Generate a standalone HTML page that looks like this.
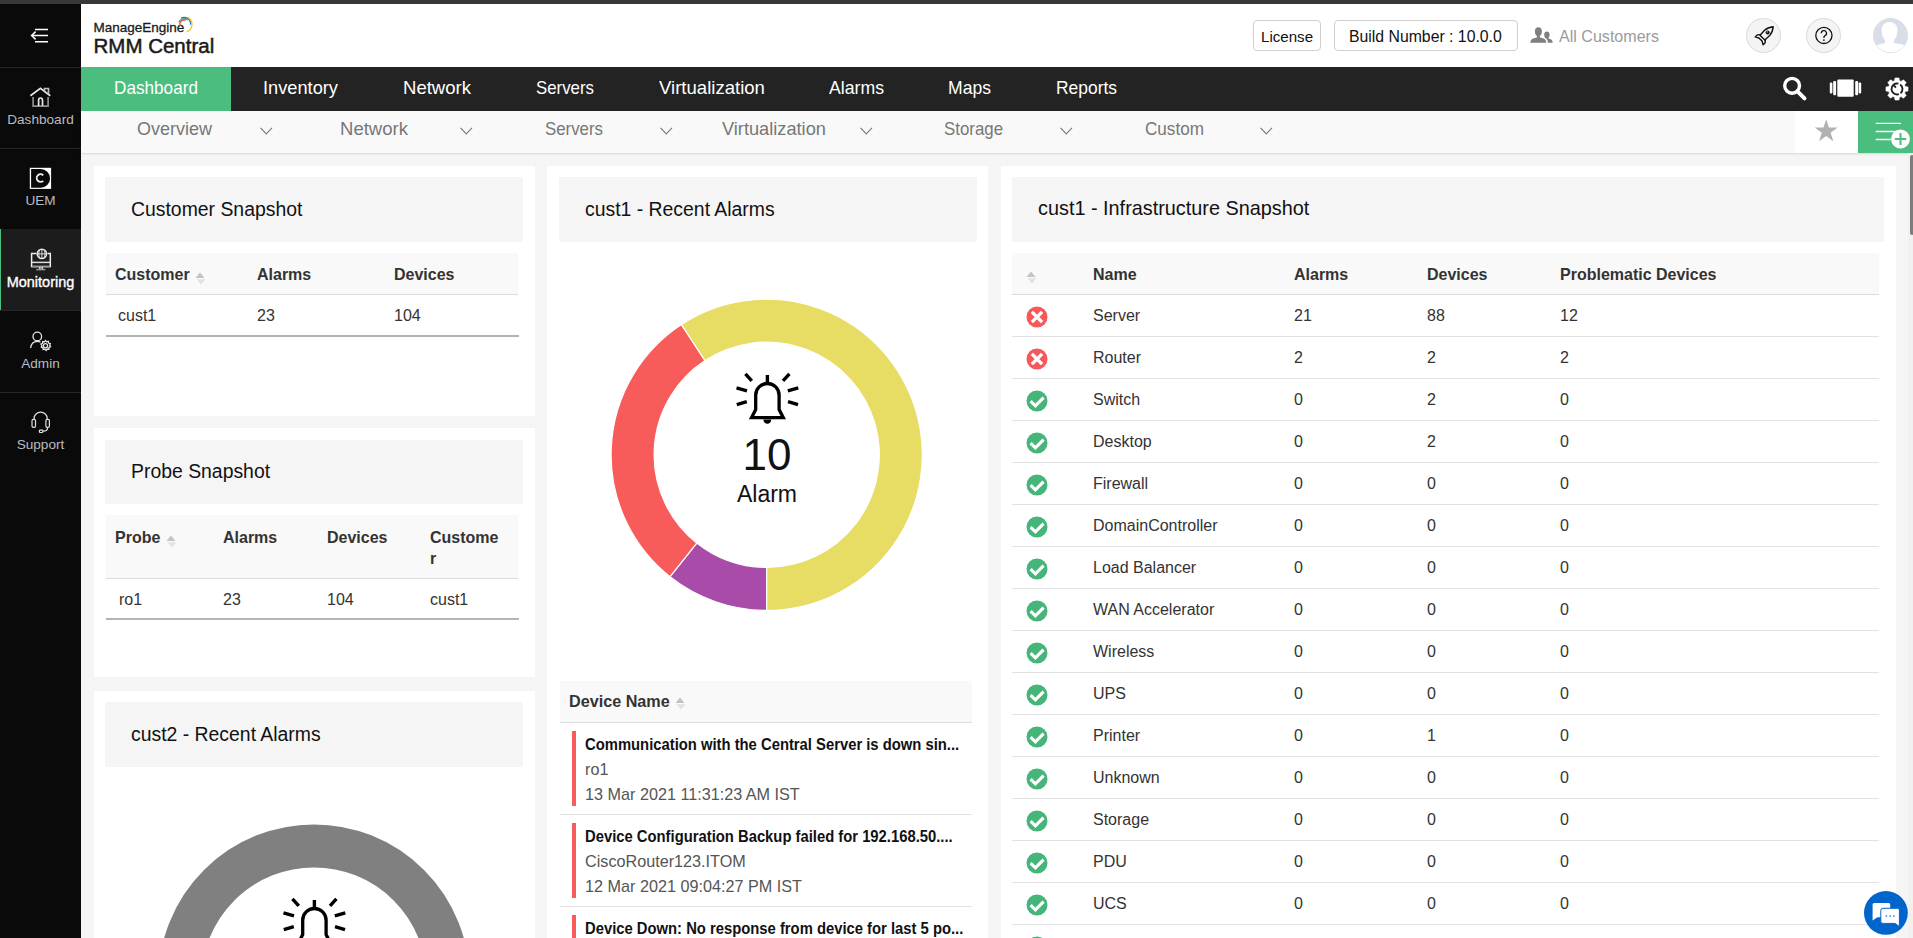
<!DOCTYPE html>
<html><head><meta charset="utf-8">
<style>
*{box-sizing:border-box;margin:0;padding:0}
html,body{width:1913px;height:938px;overflow:hidden;background:#f5f5f5;font-family:"Liberation Sans",sans-serif;color:#222}
.a{position:absolute}
.t{position:absolute;white-space:nowrap;line-height:1}
#topbar{left:0;top:0;width:1913px;height:4px;background:#37393d}
#side{left:0;top:4px;width:81px;height:934px;background:#0a0a0a}
.sep{position:absolute;left:0;width:81px;height:1px;background:#262626}
.sl{position:absolute;left:0;width:81px;text-align:center;font-size:13.6px;color:#b9bcc2;white-space:nowrap;line-height:1}
#hdr{left:81px;top:4px;width:1832px;height:63px;background:#fff}
#nav{left:81px;top:67px;width:1832px;height:44px;background:#232323}
.nv{position:absolute;top:78.6px;font-size:18.4px;transform-origin:0 0;color:#fff;white-space:nowrap;line-height:1}
#sub{left:81px;top:111px;width:1832px;height:42px;background:#f9f9f9;box-shadow:0 1px 2px rgba(0,0,0,.12)}
.sb{position:absolute;top:119.8px;font-size:18.4px;transform-origin:0 0;color:#777;white-space:nowrap;line-height:1}
.card{position:absolute;background:#fff}
.ch{position:absolute;background:#f5f5f5;border-radius:2px}
.ct{position:absolute;font-size:19.4px;color:#111;white-space:nowrap;line-height:1}
.th{position:absolute;background:#f9f9f9;border-bottom:1px solid #dcdcdc}
.hb{position:absolute;margin-top:0px;font-size:17px;transform:scaleX(0.941);transform-origin:0 0;font-weight:bold;color:#333;white-space:nowrap;line-height:1}
.td{position:absolute;font-size:16px;color:#333;white-space:nowrap;line-height:1}
.rl{position:absolute;height:1px;background:#e2e2e2}
</style></head><body>
<div id="topbar" class="a"></div>
<div id="side" class="a"></div>
<div class="sep" style="top:67px"></div>
<div class="sep" style="top:148px"></div>
<div class="sep" style="top:229px"></div>
<div class="sep" style="top:310px"></div>
<div class="sep" style="top:392px"></div>
<div class="a" style="left:0;top:229px;width:81px;height:81px;background:#1c1c1c;border-left:1px solid #4bbd7f"></div>
<div class="sl" style="top:113px">Dashboard</div>
<div class="sl" style="top:194px">UEM</div>
<div class="sl" style="top:274.5px;color:#fff;font-size:14.5px;-webkit-text-stroke:0.35px #fff">Monitoring</div>
<div class="sl" style="top:357px">Admin</div>
<div class="sl" style="top:438px">Support</div>

<div id="hdr" class="a"></div>
<div id="nav" class="a"></div>
<div class="a" style="left:81px;top:67px;width:150px;height:44px;background:#4bbd7f"></div>
<div class="nv" style="left:114px;transform:scaleX(0.933)">Dashboard</div>
<div class="nv" style="left:263px;transform:scaleX(0.991)">Inventory</div>
<div class="nv" style="left:403px;transform:scaleX(1.008)">Network</div>
<div class="nv" style="left:536px;transform:scaleX(0.915)">Servers</div>
<div class="nv" style="left:659px;transform:scaleX(1.009)">Virtualization</div>
<div class="nv" style="left:829px;transform:scaleX(0.961)">Alarms</div>
<div class="nv" style="left:948px;transform:scaleX(0.955)">Maps</div>
<div class="nv" style="left:1056px;transform:scaleX(0.947)">Reports</div>

<div id="sub" class="a"></div>
<div class="sb" style="left:137px;transform:scaleX(0.978)">Overview</div>
<div class="sb" style="left:340px;transform:scaleX(1.008)">Network</div>
<div class="sb" style="left:545px;transform:scaleX(0.915)">Servers</div>
<div class="sb" style="left:722px;transform:scaleX(0.990)">Virtualization</div>
<div class="sb" style="left:944px;transform:scaleX(0.916)">Storage</div>
<div class="sb" style="left:1145px;transform:scaleX(0.930)">Custom</div>
<div class="a" style="left:1795px;top:111px;width:63px;height:42px;background:#fff"></div>
<div class="a" style="left:1858px;top:111px;width:55px;height:42px;background:#4bbd7f"></div>

<!-- Card A -->
<div class="card" style="left:94px;top:166px;width:441px;height:250px"></div>
<div class="ch" style="left:105px;top:177px;width:418px;height:65px"></div>
<div class="ct" style="left:131px;top:200px">Customer Snapshot</div>
<div class="th" style="left:106px;top:253px;width:412px;height:42px"></div>
<div class="hb" style="left:115px;top:266px">Customer</div>
<div class="hb" style="left:257px;top:266px">Alarms</div>
<div class="hb" style="left:394px;top:266px">Devices</div>
<div class="td" style="left:118px;top:308px">cust1</div>
<div class="td" style="left:257px;top:308px">23</div>
<div class="td" style="left:394px;top:308px">104</div>
<div class="a" style="left:106px;top:335px;width:413px;height:2px;background:#b4b4b4"></div>

<!-- Card B -->
<div class="card" style="left:94px;top:428px;width:441px;height:249px"></div>
<div class="ch" style="left:105px;top:440px;width:418px;height:64px"></div>
<div class="ct" style="left:131px;top:462px">Probe Snapshot</div>
<div class="th" style="left:106px;top:515px;width:412px;height:64px"></div>
<div class="hb" style="left:115px;top:529px">Probe</div>
<div class="hb" style="left:223px;top:529px">Alarms</div>
<div class="hb" style="left:327px;top:529px">Devices</div>
<div class="hb" style="left:430px;top:529px">Custome</div>
<div class="hb" style="left:430px;top:550px">r</div>
<div class="td" style="left:119px;top:592px">ro1</div>
<div class="td" style="left:223px;top:592px">23</div>
<div class="td" style="left:327px;top:592px">104</div>
<div class="td" style="left:430px;top:592px">cust1</div>
<div class="a" style="left:106px;top:618px;width:413px;height:2px;background:#b4b4b4"></div>

<!-- Card C -->
<div class="card" style="left:94px;top:691px;width:441px;height:247px"></div>
<div class="ch" style="left:105px;top:702px;width:418px;height:65px"></div>
<div class="ct" style="left:131px;top:725px">cust2 - Recent Alarms</div>

<!-- Card D -->
<div class="card" style="left:547px;top:166px;width:441px;height:772px"></div>
<div class="ch" style="left:559px;top:177px;width:418px;height:65px"></div>
<div class="ct" style="left:585px;top:200px">cust1 - Recent Alarms</div>

<!-- Card E -->
<div class="card" style="left:1001px;top:166px;width:895px;height:772px"></div>
<div class="ch" style="left:1012px;top:177px;width:872px;height:65px"></div>
<div class="ct" style="left:1038px;top:199px;font-size:19.85px">cust1 - Infrastructure Snapshot</div>
<div class="th" style="left:1012px;top:253px;width:867px;height:42px"></div>
<div class="hb" style="left:1093px;top:266px">Name</div>
<div class="hb" style="left:1294px;top:266px">Alarms</div>
<div class="hb" style="left:1427px;top:266px">Devices</div>
<div class="hb" style="left:1560px;top:266px">Problematic Devices</div>
<div class="rl" style="left:1012px;top:336px;width:867px"></div>
<svg class="a" style="left:1026px;top:306px" width="22" height="22" viewBox="0 0 22 22"><circle cx="11" cy="11" r="10.5" fill="#f55a5a"/><path d="M5.9 5.9L16.1 16.1M16.1 5.9L5.9 16.1" stroke="#fff" stroke-width="3.3" fill="none"/></svg>
<div class="td" style="left:1093px;top:308px">Server</div>
<div class="td" style="left:1294px;top:308px">21</div>
<div class="td" style="left:1427px;top:308px">88</div>
<div class="td" style="left:1560px;top:308px">12</div>
<div class="rl" style="left:1012px;top:378px;width:867px"></div>
<svg class="a" style="left:1026px;top:348px" width="22" height="22" viewBox="0 0 22 22"><circle cx="11" cy="11" r="10.5" fill="#f55a5a"/><path d="M5.9 5.9L16.1 16.1M16.1 5.9L5.9 16.1" stroke="#fff" stroke-width="3.3" fill="none"/></svg>
<div class="td" style="left:1093px;top:350px">Router</div>
<div class="td" style="left:1294px;top:350px">2</div>
<div class="td" style="left:1427px;top:350px">2</div>
<div class="td" style="left:1560px;top:350px">2</div>
<div class="rl" style="left:1012px;top:420px;width:867px"></div>
<svg class="a" style="left:1026px;top:390px" width="22" height="22" viewBox="0 0 22 22"><circle cx="11" cy="11" r="10.5" fill="#46b57a"/><path d="M4.6 11.2L9.4 15.8 17.6 7.6" stroke="#fff" stroke-width="3.2" fill="none"/></svg>
<div class="td" style="left:1093px;top:392px">Switch</div>
<div class="td" style="left:1294px;top:392px">0</div>
<div class="td" style="left:1427px;top:392px">2</div>
<div class="td" style="left:1560px;top:392px">0</div>
<div class="rl" style="left:1012px;top:462px;width:867px"></div>
<svg class="a" style="left:1026px;top:432px" width="22" height="22" viewBox="0 0 22 22"><circle cx="11" cy="11" r="10.5" fill="#46b57a"/><path d="M4.6 11.2L9.4 15.8 17.6 7.6" stroke="#fff" stroke-width="3.2" fill="none"/></svg>
<div class="td" style="left:1093px;top:434px">Desktop</div>
<div class="td" style="left:1294px;top:434px">0</div>
<div class="td" style="left:1427px;top:434px">2</div>
<div class="td" style="left:1560px;top:434px">0</div>
<div class="rl" style="left:1012px;top:504px;width:867px"></div>
<svg class="a" style="left:1026px;top:474px" width="22" height="22" viewBox="0 0 22 22"><circle cx="11" cy="11" r="10.5" fill="#46b57a"/><path d="M4.6 11.2L9.4 15.8 17.6 7.6" stroke="#fff" stroke-width="3.2" fill="none"/></svg>
<div class="td" style="left:1093px;top:476px">Firewall</div>
<div class="td" style="left:1294px;top:476px">0</div>
<div class="td" style="left:1427px;top:476px">0</div>
<div class="td" style="left:1560px;top:476px">0</div>
<div class="rl" style="left:1012px;top:546px;width:867px"></div>
<svg class="a" style="left:1026px;top:516px" width="22" height="22" viewBox="0 0 22 22"><circle cx="11" cy="11" r="10.5" fill="#46b57a"/><path d="M4.6 11.2L9.4 15.8 17.6 7.6" stroke="#fff" stroke-width="3.2" fill="none"/></svg>
<div class="td" style="left:1093px;top:518px">DomainController</div>
<div class="td" style="left:1294px;top:518px">0</div>
<div class="td" style="left:1427px;top:518px">0</div>
<div class="td" style="left:1560px;top:518px">0</div>
<div class="rl" style="left:1012px;top:588px;width:867px"></div>
<svg class="a" style="left:1026px;top:558px" width="22" height="22" viewBox="0 0 22 22"><circle cx="11" cy="11" r="10.5" fill="#46b57a"/><path d="M4.6 11.2L9.4 15.8 17.6 7.6" stroke="#fff" stroke-width="3.2" fill="none"/></svg>
<div class="td" style="left:1093px;top:560px">Load Balancer</div>
<div class="td" style="left:1294px;top:560px">0</div>
<div class="td" style="left:1427px;top:560px">0</div>
<div class="td" style="left:1560px;top:560px">0</div>
<div class="rl" style="left:1012px;top:630px;width:867px"></div>
<svg class="a" style="left:1026px;top:600px" width="22" height="22" viewBox="0 0 22 22"><circle cx="11" cy="11" r="10.5" fill="#46b57a"/><path d="M4.6 11.2L9.4 15.8 17.6 7.6" stroke="#fff" stroke-width="3.2" fill="none"/></svg>
<div class="td" style="left:1093px;top:602px">WAN Accelerator</div>
<div class="td" style="left:1294px;top:602px">0</div>
<div class="td" style="left:1427px;top:602px">0</div>
<div class="td" style="left:1560px;top:602px">0</div>
<div class="rl" style="left:1012px;top:672px;width:867px"></div>
<svg class="a" style="left:1026px;top:642px" width="22" height="22" viewBox="0 0 22 22"><circle cx="11" cy="11" r="10.5" fill="#46b57a"/><path d="M4.6 11.2L9.4 15.8 17.6 7.6" stroke="#fff" stroke-width="3.2" fill="none"/></svg>
<div class="td" style="left:1093px;top:644px">Wireless</div>
<div class="td" style="left:1294px;top:644px">0</div>
<div class="td" style="left:1427px;top:644px">0</div>
<div class="td" style="left:1560px;top:644px">0</div>
<div class="rl" style="left:1012px;top:714px;width:867px"></div>
<svg class="a" style="left:1026px;top:684px" width="22" height="22" viewBox="0 0 22 22"><circle cx="11" cy="11" r="10.5" fill="#46b57a"/><path d="M4.6 11.2L9.4 15.8 17.6 7.6" stroke="#fff" stroke-width="3.2" fill="none"/></svg>
<div class="td" style="left:1093px;top:686px">UPS</div>
<div class="td" style="left:1294px;top:686px">0</div>
<div class="td" style="left:1427px;top:686px">0</div>
<div class="td" style="left:1560px;top:686px">0</div>
<div class="rl" style="left:1012px;top:756px;width:867px"></div>
<svg class="a" style="left:1026px;top:726px" width="22" height="22" viewBox="0 0 22 22"><circle cx="11" cy="11" r="10.5" fill="#46b57a"/><path d="M4.6 11.2L9.4 15.8 17.6 7.6" stroke="#fff" stroke-width="3.2" fill="none"/></svg>
<div class="td" style="left:1093px;top:728px">Printer</div>
<div class="td" style="left:1294px;top:728px">0</div>
<div class="td" style="left:1427px;top:728px">1</div>
<div class="td" style="left:1560px;top:728px">0</div>
<div class="rl" style="left:1012px;top:798px;width:867px"></div>
<svg class="a" style="left:1026px;top:768px" width="22" height="22" viewBox="0 0 22 22"><circle cx="11" cy="11" r="10.5" fill="#46b57a"/><path d="M4.6 11.2L9.4 15.8 17.6 7.6" stroke="#fff" stroke-width="3.2" fill="none"/></svg>
<div class="td" style="left:1093px;top:770px">Unknown</div>
<div class="td" style="left:1294px;top:770px">0</div>
<div class="td" style="left:1427px;top:770px">0</div>
<div class="td" style="left:1560px;top:770px">0</div>
<div class="rl" style="left:1012px;top:840px;width:867px"></div>
<svg class="a" style="left:1026px;top:810px" width="22" height="22" viewBox="0 0 22 22"><circle cx="11" cy="11" r="10.5" fill="#46b57a"/><path d="M4.6 11.2L9.4 15.8 17.6 7.6" stroke="#fff" stroke-width="3.2" fill="none"/></svg>
<div class="td" style="left:1093px;top:812px">Storage</div>
<div class="td" style="left:1294px;top:812px">0</div>
<div class="td" style="left:1427px;top:812px">0</div>
<div class="td" style="left:1560px;top:812px">0</div>
<div class="rl" style="left:1012px;top:882px;width:867px"></div>
<svg class="a" style="left:1026px;top:852px" width="22" height="22" viewBox="0 0 22 22"><circle cx="11" cy="11" r="10.5" fill="#46b57a"/><path d="M4.6 11.2L9.4 15.8 17.6 7.6" stroke="#fff" stroke-width="3.2" fill="none"/></svg>
<div class="td" style="left:1093px;top:854px">PDU</div>
<div class="td" style="left:1294px;top:854px">0</div>
<div class="td" style="left:1427px;top:854px">0</div>
<div class="td" style="left:1560px;top:854px">0</div>
<div class="rl" style="left:1012px;top:924px;width:867px"></div>
<svg class="a" style="left:1026px;top:894px" width="22" height="22" viewBox="0 0 22 22"><circle cx="11" cy="11" r="10.5" fill="#46b57a"/><path d="M4.6 11.2L9.4 15.8 17.6 7.6" stroke="#fff" stroke-width="3.2" fill="none"/></svg>
<div class="td" style="left:1093px;top:896px">UCS</div>
<div class="td" style="left:1294px;top:896px">0</div>
<div class="td" style="left:1427px;top:896px">0</div>
<div class="td" style="left:1560px;top:896px">0</div>
<div class="rl" style="left:1012px;top:966px;width:867px"></div>
<svg class="a" style="left:1026px;top:936px" width="22" height="22" viewBox="0 0 22 22"><circle cx="11" cy="11" r="10.5" fill="#46b57a"/><path d="M4.6 11.2L9.4 15.8 17.6 7.6" stroke="#fff" stroke-width="3.2" fill="none"/></svg>

<svg class="a" style="left:547px;top:166px" width="441" height="500" viewBox="0 0 441 500"><path d="M219.70 444.40A155.6 155.6 0 0 1 123.05 410.74L149.76 377.04A112.6 112.6 0 0 0 219.70 401.40Z" fill="#a94ca9" stroke="#fff" stroke-width="1.2"/><path d="M123.05 410.74A155.6 155.6 0 0 1 134.50 158.60L158.04 194.58A112.6 112.6 0 0 0 149.76 377.04Z" fill="#f85c5a" stroke="#fff" stroke-width="1.2"/><path d="M134.50 158.60A155.6 155.6 0 1 1 219.70 444.40L219.70 401.40A112.6 112.6 0 1 0 158.04 194.58Z" fill="#e7dc64" stroke="#fff" stroke-width="1.2"/></svg>
<svg class="a" style="left:94px;top:767px" width="441" height="171" viewBox="0 0 441 171"><circle cx="220" cy="213" r="134.1" stroke="#808080" stroke-width="43" fill="none"/></svg>
<svg class="a" style="left:732px;top:368px" width="71" height="58" viewBox="0 0 71 58"><path d="M13.4 5.8L19.8 12.8M4.5 19.8L15 22.8M4.8 36.6L14.8 33.6M57.4 5.8L51 12.8M66.3 19.8L55.8 22.8M66 36.6L56 33.6M35.4 7V14.5" stroke="#000" stroke-width="3.4" fill="none"/><path d="M19.5 49.7L23.7 41.6V27.2A11.7 11.7 0 0 1 47.1 27.2V41.6L51.3 49.7Z" stroke="#000" stroke-width="3.3" fill="none" stroke-linejoin="miter"/><path d="M31.4 51.4A3.95 4.4 0 0 0 39.3 51.4Z" fill="#000"/></svg>
<svg class="a" style="left:279px;top:893px" width="71" height="58" viewBox="0 0 71 58"><path d="M13.4 5.8L19.8 12.8M4.5 19.8L15 22.8M4.8 36.6L14.8 33.6M57.4 5.8L51 12.8M66.3 19.8L55.8 22.8M66 36.6L56 33.6M35.4 7V14.5" stroke="#000" stroke-width="3.4" fill="none"/><path d="M19.5 49.7L23.7 41.6V27.2A11.7 11.7 0 0 1 47.1 27.2V41.6L51.3 49.7Z" stroke="#000" stroke-width="3.3" fill="none" stroke-linejoin="miter"/><path d="M31.4 51.4A3.95 4.4 0 0 0 39.3 51.4Z" fill="#000"/></svg>
<div class="t" style="left:667px;width:200px;text-align:center;top:433px;font-size:44px;color:#111">10</div>
<div class="t" style="left:667px;width:200px;text-align:center;top:482.5px;font-size:23px;color:#111">Alarm</div>
<div class="th" style="left:560px;top:681px;width:412px;height:42px"></div>
<div class="hb" style="left:569px;top:693px;font-size:17.2px">Device Name</div>
<div class="a" style="left:572px;top:731px;width:4px;height:75px;background:#f85c5a"></div>
<div class="t" style="left:585px;top:736.0px;font-size:16.5px;font-weight:bold;color:#111;transform:scaleX(0.897);transform-origin:0 0">Communication with the Central Server is down sin...</div>
<div class="t" style="left:585px;top:761.0px;font-size:16.2px;color:#555">ro1</div>
<div class="t" style="left:585px;top:786.0px;font-size:16.2px;color:#555">13 Mar 2021 11:31:23 AM IST</div>
<div class="rl" style="left:560px;top:814px;width:412px"></div>
<div class="a" style="left:572px;top:823px;width:4px;height:75px;background:#f85c5a"></div>
<div class="t" style="left:585px;top:828.0px;font-size:16.5px;font-weight:bold;color:#111;transform:scaleX(0.897);transform-origin:0 0">Device Configuration Backup failed for 192.168.50....</div>
<div class="t" style="left:585px;top:853.0px;font-size:16.2px;color:#555">CiscoRouter123.ITOM</div>
<div class="t" style="left:585px;top:878.0px;font-size:16.2px;color:#555">12 Mar 2021 09:04:27 PM IST</div>
<div class="rl" style="left:560px;top:906px;width:412px"></div>
<div class="a" style="left:572px;top:915px;width:4px;height:75px;background:#f85c5a"></div>
<div class="t" style="left:585px;top:920.0px;font-size:16.5px;font-weight:bold;color:#111;transform:scaleX(0.897);transform-origin:0 0">Device Down: No response from device for last 5 po...</div>
<svg class="a" style="left:195px;top:272px" width="11" height="13" viewBox="0 0 11 13"><path d="M0.5 6L5 0.5 9.5 6z" fill="#c4c4c4"/><path d="M1.5 7.2L6 12.5 10.5 7.2z" fill="#e2e2e2"/></svg>
<svg class="a" style="left:166px;top:535px" width="11" height="13" viewBox="0 0 11 13"><path d="M0.5 6L5 0.5 9.5 6z" fill="#c4c4c4"/><path d="M1.5 7.2L6 12.5 10.5 7.2z" fill="#e2e2e2"/></svg>
<svg class="a" style="left:1026px;top:271px" width="11" height="13" viewBox="0 0 11 13"><path d="M0.5 6L5 0.5 9.5 6z" fill="#c4c4c4"/><path d="M1.5 7.2L6 12.5 10.5 7.2z" fill="#e2e2e2"/></svg>
<svg class="a" style="left:675px;top:697px" width="11" height="13" viewBox="0 0 11 13"><path d="M0.5 6L5 0.5 9.5 6z" fill="#c4c4c4"/><path d="M1.5 7.2L6 12.5 10.5 7.2z" fill="#e2e2e2"/></svg>
<div class="t" style="left:93.5px;top:20.5px;font-size:13.5px;color:#1a1a1a;-webkit-text-stroke:0.3px #1a1a1a">ManageEngine</div>
<div class="t" style="left:93.5px;top:36.2px;font-size:20.5px;color:#1a1a1a;-webkit-text-stroke:0.5px #1a1a1a">RMM Central</div>
<svg class="a" style="left:175px;top:14.2px" width="20" height="20" viewBox="0 0 20 20"><g fill="none" stroke-width="1.4"><path d="M5.05 11.64A4.2 4.2 0 0 1 10.44 6.25" stroke="#e94a4a"/><path d="M3.83 8.32A5.5 5.5 0 0 1 12.54 5.99" stroke="#3fae5a"/><path d="M6.13 4.04A6.8 6.8 0 0 1 15.77 10.79" stroke="#2b73c9"/><path d="M13.00 3.27A8 8 0 0 1 11.74 17.72" stroke="#f2c93a"/></g></svg>
<div class="a" style="left:1253px;top:20px;width:68px;height:31px;border:1px solid #cfcfcf;border-radius:4px;background:#fff"></div>
<div class="t" style="left:1261px;top:29.3px;font-size:15.1px;color:#111">License</div>
<div class="a" style="left:1334px;top:20px;width:184px;height:31px;border:1px solid #cfcfcf;border-radius:4px;background:#fff"></div>
<div class="t" style="left:1349px;top:28.8px;font-size:15.8px;color:#111">Build Number : 10.0.0</div>
<svg class="a" style="left:1529px;top:26px" width="26" height="18" viewBox="0 0 26 18"><g fill="#7f7f7f"><path d="M9.4 1.3C7.3 1.3 5.9 2.8 5.9 5.4C5.9 7.6 6.8 9.2 7.9 10V11.5L5 12.2C2.5 12.8 1.6 13.8 1.3 16.8H17.3C17 13.8 16.2 12.8 13.8 12.2L10.9 11.5V10C12 9.2 12.9 7.6 12.9 5.4C12.9 2.8 11.5 1.3 9.4 1.3Z"/><path d="M17.9 5.5C16.3 5.5 15.2 6.7 15.2 8.7C15.2 10.3 15.8 11.5 16.6 12.2L17.6 13C18.4 13.8 18.8 15 18.9 16.8H23.7C23.5 14.5 22.8 13.6 21.2 13.1L19.4 12.5V12C20.1 11.4 20.6 10.2 20.6 8.7C20.6 6.7 19.5 5.5 17.9 5.5Z"/></g></svg>
<div class="t" style="left:1559px;top:28.3px;font-size:16.07px;color:#9b9b9b">All Customers</div>
<div class="a" style="left:1746px;top:18px;width:35px;height:35px;border:1px solid #d9d9d9;border-radius:50%;background:#f4f4f4"></div>
<div class="a" style="left:1806px;top:18px;width:35px;height:35px;border:1px solid #d9d9d9;border-radius:50%;background:#f4f4f4"></div>
<div class="a" style="left:1873px;top:18px;width:35px;height:35px;border:1px solid #d9d9d9;border-radius:50%;background:#f4f4f4"></div>
<svg class="a" style="left:1752px;top:24px" width="23" height="23" viewBox="0 0 23 23"><g fill="none" stroke="#111" stroke-width="1.4" stroke-linejoin="round"><path d="M21.2 2.8C17 3.3 14.6 4.4 12.6 6.3L8 11.2L12.8 16L17.7 11.4C19.6 9.4 20.7 7 21.2 2.8Z"/><path d="M8.6 10.6L5.3 10.9 3.2 12.9 7.1 14"/><path d="M13.4 15.4L13.1 18.7 11.1 20.8 10 16.9"/><path d="M6.9 13.9L10.1 17.1"/></g><circle cx="15.6" cy="8.4" r="2" fill="#111"/><circle cx="15.1" cy="7.9" r="0.6" fill="#f4f4f4"/></svg>
<svg class="a" style="left:1812px;top:24px" width="23" height="23" viewBox="0 0 23 23"><circle cx="11.9" cy="11.4" r="8.1" fill="none" stroke="#111" stroke-width="1.3"/><path d="M9.3 9.2A2.6 2.6 0 1 1 13.1 11.5C12.3 12 11.9 12.5 11.9 13.5V14.1" fill="none" stroke="#111" stroke-width="1.3"/><circle cx="11.9" cy="16.1" r="0.85" fill="#111"/></svg>
<svg class="a" style="left:1873px;top:18px" width="35" height="35" viewBox="0 0 35 35"><defs><clipPath id="av"><circle cx="17.5" cy="17.5" r="16.8"/></clipPath></defs><circle cx="17.5" cy="17.5" r="17" fill="#dfe3e9"/><circle cx="17.5" cy="17.5" r="16.5" fill="#d8dee8"/><g clip-path="url(#av)"><path d="M16.5 4C10.8 4 8.2 8.5 8.6 13.5C9 18 10.5 20.5 12 22.3V25C8 26.2 3 27 0 27.8V36H35V27.8C32 27 27 26.2 21 25V22.3C22.5 20.5 24 18 24.4 13.5C24.8 8.5 22.2 4 16.5 4Z" fill="#fff"/></g></svg>
<svg class="a" style="left:1780px;top:74px" width="30" height="28" viewBox="0 0 30 28"><circle cx="12.1" cy="11.8" r="7.4" fill="none" stroke="#fff" stroke-width="3.4"/><path d="M17.5 17.3L24.5 24.3" stroke="#fff" stroke-width="4" stroke-linecap="round"/></svg>
<svg class="a" style="left:1828px;top:78px" width="36" height="20" viewBox="0 0 36 20"><rect x="9.3" y="1.6" width="16.4" height="17.2" rx="1" fill="#fff"/><rect x="5.2" y="3" width="2.9" height="14.3" rx="1" fill="#fff"/><rect x="1.8" y="4.6" width="2.6" height="10.8" rx="1" fill="#fff"/><rect x="27.2" y="3" width="2.9" height="14.3" rx="1" fill="#fff"/><rect x="30.6" y="4.6" width="2.6" height="10.8" rx="1" fill="#fff"/></svg>
<svg class="a" style="left:1884.5px;top:77px" width="24" height="24" viewBox="0 0 24 24"><path d="M9.49 3.78L10.06 0.97L13.94 0.97L14.51 3.78L16.04 4.41L18.42 2.83L21.17 5.58L19.59 7.96L20.22 9.49L23.03 10.06L23.03 13.94L20.22 14.51L19.59 16.04L21.17 18.42L18.42 21.17L16.04 19.59L14.51 20.22L13.94 23.03L10.06 23.03L9.49 20.22L7.96 19.59L5.58 21.17L2.83 18.42L4.41 16.04L3.78 14.51L0.97 13.94L0.97 10.06L3.78 9.49L4.41 7.96L2.83 5.58L5.58 2.83L7.96 4.41Z" fill="#fff" stroke="#fff" stroke-width="0.6" stroke-linejoin="round"/><g fill="none" stroke="#232323" stroke-width="1.9"><path d="M15.15 7.49A5.5 5.5 0 0 1 15.54 16.21"/><path d="M13.88 17.17A5.5 5.5 0 1 1 13.42 6.69"/><path d="M8.4 7.9L10.9 10.6"/></g></svg>
<svg class="a" style="left:260px;top:127px" width="13" height="8" viewBox="0 0 13 8"><path d="M0.6 0.8L6.3 6.9 12 0.8" fill="none" stroke="#7a7a7a" stroke-width="1.1"/></svg>
<svg class="a" style="left:460px;top:127px" width="13" height="8" viewBox="0 0 13 8"><path d="M0.6 0.8L6.3 6.9 12 0.8" fill="none" stroke="#7a7a7a" stroke-width="1.1"/></svg>
<svg class="a" style="left:660px;top:127px" width="13" height="8" viewBox="0 0 13 8"><path d="M0.6 0.8L6.3 6.9 12 0.8" fill="none" stroke="#7a7a7a" stroke-width="1.1"/></svg>
<svg class="a" style="left:860px;top:127px" width="13" height="8" viewBox="0 0 13 8"><path d="M0.6 0.8L6.3 6.9 12 0.8" fill="none" stroke="#7a7a7a" stroke-width="1.1"/></svg>
<svg class="a" style="left:1060px;top:127px" width="13" height="8" viewBox="0 0 13 8"><path d="M0.6 0.8L6.3 6.9 12 0.8" fill="none" stroke="#7a7a7a" stroke-width="1.1"/></svg>
<svg class="a" style="left:1260px;top:127px" width="13" height="8" viewBox="0 0 13 8"><path d="M0.6 0.8L6.3 6.9 12 0.8" fill="none" stroke="#7a7a7a" stroke-width="1.1"/></svg>
<svg class="a" style="left:1814px;top:118px" width="25" height="25" viewBox="0 0 25 25"><path d="M12.20 1.14L14.93 9.54L23.76 9.54L16.62 14.74L19.35 23.14L12.20 17.95L5.05 23.14L7.78 14.74L0.64 9.54L9.47 9.54Z" fill="#b2b2b2"/></svg>
<svg class="a" style="left:1870px;top:116px" width="43" height="36" viewBox="0 0 43 36"><g stroke="#fff" stroke-width="1.4"><path d="M5.8 7.4H31M5.8 15.5H31M5.8 23.5H31"/></g><circle cx="30.5" cy="23" r="9.4" fill="#fff"/><path d="M24.8 23H36.2M30.5 17V29" stroke="#4bbd7f" stroke-width="2"/></svg>
<svg class="a" style="left:1863px;top:890px" width="46" height="46" viewBox="0 0 46 46"><circle cx="22.9" cy="22.9" r="21.9" fill="#0066cc"/><path d="M11.1 12.9H25.7Q27.2 12.9 27.2 14.4V27.2H14.4L9.6 30.4V14.4Q9.6 12.9 11.1 12.9Z" fill="#fff"/><path d="M19.8 18.3H34.4Q36.4 18.3 36.4 20.3V36.6L32 33.4H19.8Q17.8 33.4 17.8 31.4V20.3Q17.8 18.3 19.8 18.3Z" fill="#fff" stroke="#0066cc" stroke-width="1"/><g fill="#3a85d8"><circle cx="23.3" cy="26.1" r="0.9"/><circle cx="27.2" cy="26.1" r="0.9"/><circle cx="30.9" cy="26.1" r="0.9"/></g></svg>
<div class="a" style="left:1908px;top:153px;width:5px;height:785px;background:#f1f1f1"></div>
<div class="a" style="left:1909.5px;top:155px;width:4px;height:80px;background:#7d7d7d;border-radius:3px"></div>
<svg class="a" style="left:28px;top:26px" width="24" height="20" viewBox="0 0 24 20"><g stroke="#fff" stroke-width="1.5" fill="none"><path d="M7 3.5H20M4 9.5H20M7 15.7H20"/><path d="M7.6 5.6L3.6 9.5 7.6 13.4"/></g></svg>
<svg class="a" style="left:28px;top:85px" width="26" height="24" viewBox="0 0 26 24"><g fill="none" stroke-width="1.7"><path d="M2.4 10.7L12.4 3.4 22.3 10.7" stroke="#e6e6e6"/><path d="M16.5 6.3V3.5H20.5V8.8" stroke="#bdbdbd"/><path d="M5.1 11.9V21.1H20.1V11.9" stroke="#8e8e8e"/><path d="M10.6 21V15.3C10.6 13.3 11.5 13 12.55 13S14.5 13.3 14.5 15.3V21" stroke="#e6e6e6"/></g></svg>
<svg class="a" style="left:29px;top:167px" width="24" height="23" viewBox="0 0 24 23"><rect x="0.8" y="0.8" width="21.3" height="21.1" fill="#fff"/><path d="M2.1 2.1H11.7A9.35 9.35 0 0 1 11.7 20.8H2.1Z" fill="#0a0a0a"/><path d="M14.2 8.4A3.8 3.8 0 1 0 14.2 13.8" fill="none" stroke="#eee" stroke-width="1.9"/></svg>
<svg class="a" style="left:29px;top:247px" width="24" height="24" viewBox="0 0 24 24"><g fill="none" stroke-width="1.5"><path d="M7.5 6.4H2.6V19.5H21.3V6.4H18.5" stroke="#eee"/><path d="M2.6 15.4H21.3" stroke="#ddd"/><path d="M3 19.7H21" stroke="#999"/><path d="M10.8 19.7V22.3M13.2 19.7V22.3" stroke="#ddd"/><path d="M7.2 22.6H16.3" stroke="#999"/><circle cx="12.9" cy="6.9" r="4.6" stroke="#eee"/><path d="M12.9 2.3V11.5M8.3 6.9H17.5M10.6 3C9.6 5.5 9.6 8.3 10.6 10.8M15.2 3C16.2 5.5 16.2 8.3 15.2 10.8" stroke="#ddd" stroke-width="1"/></g></svg>
<svg class="a" style="left:28px;top:330px" width="25" height="23" viewBox="0 0 25 23"><g fill="none" stroke="#e4e4e4" stroke-width="1.3"><circle cx="9.3" cy="6.4" r="4.3"/><path d="M2.6 18C3.2 13.5 6 11.4 9.3 11.4C10.6 11.4 11.6 11.7 12.5 12.2"/><circle cx="17.5" cy="15.7" r="2.1"/><path d="M17.5 10.6L18.6 11.8 20.3 11.3 20.6 13 22.3 13.6 21.7 15.2 22.6 16.7 21 17.5 20.9 19.3 19.2 19 18.1 20.4 16.9 19.1 15.2 19.5 15 17.8 13.3 17.2 13.9 15.6 13 14.1 14.6 13.3 14.7 11.6 16.4 11.9Z"/></g></svg>
<svg class="a" style="left:29px;top:410px" width="24" height="24" viewBox="0 0 24 24"><g fill="none" stroke="#e0e0e0" stroke-width="1.2"><path d="M5.1 9V8.3A6.55 6.1 0 0 1 18.2 8.3V9"/><rect x="3" y="9.4" width="3.5" height="8" rx="1.3"/><rect x="16.9" y="9.4" width="3.5" height="8" rx="1.3"/><path d="M18.6 17.4C18.6 20 16.6 21.2 13.9 21.2"/><rect x="10.4" y="20.1" width="3.4" height="2.4" rx="0.7"/></g></svg>
</body></html>
